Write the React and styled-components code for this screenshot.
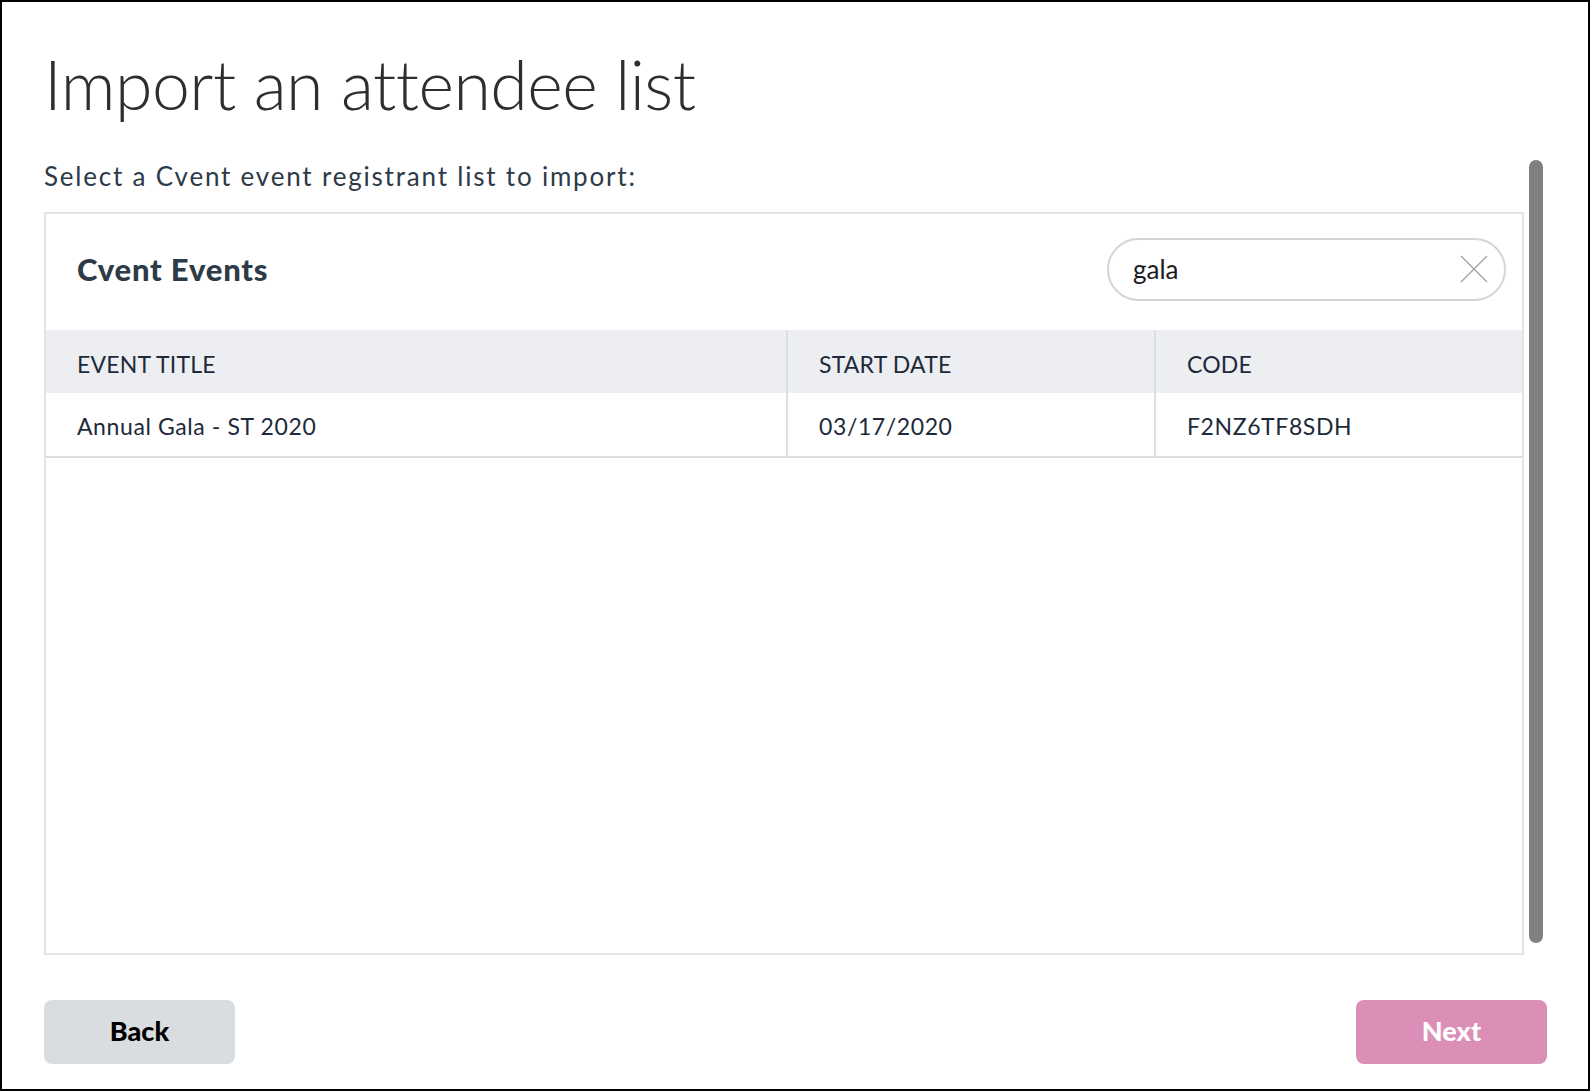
import React, { useState } from "react";
import styled, { createGlobalStyle } from "styled-components";

const GlobalStyle = createGlobalStyle`
  html, body {
    margin: 0;
    padding: 0;
    background: #fff;
  }
  * {
    box-sizing: border-box;
  }
`;

const events = [
  { id: 1, title: "Annual Gala - ST 2020", start: "03/17/2020", code: "F2NZ6TF8SDH" },
];

const columns = ["Event Title", "Start Date", "Code"];

export default function App() {
  const [query, setQuery] = useState("gala");

  return (
    <Page>
      <GlobalStyle />
      <Title>Import an attendee list</Title>
      <Body>
        <Content>
          <Subtitle>Select a Cvent event registrant list to import:</Subtitle>
          <Card>
            <CardHeader>
              <CardTitle>Cvent Events</CardTitle>
              <SearchBox>
                <SearchInput value={query} onChange={(e) => setQuery(e.target.value)} />
                <ClearButton onClick={() => setQuery("")} aria-label="Clear search">
                  <svg width="28" height="28" viewBox="0 0 28 28">
                    <path d="M1 1 L27 27 M27 1 L1 27" stroke="#9a9ea3" strokeWidth="1.2" fill="none" />
                  </svg>
                </ClearButton>
              </SearchBox>
            </CardHeader>
            <Row $head>
              {columns.map((c) => (
                <Cell key={c} $head>
                  {c}
                </Cell>
              ))}
            </Row>
            {events.map((ev) => (
              <Row key={ev.id}>
                <Cell>{ev.title}</Cell>
                <Cell>{ev.start}</Cell>
                <Cell>{ev.code}</Cell>
              </Row>
            ))}
          </Card>
        </Content>
        <ScrollTrack>
          <ScrollThumb />
        </ScrollTrack>
      </Body>
      <Footer>
        <Button>Back</Button>
        <Button $primary>Next</Button>
      </Footer>
    </Page>
  );
}

const Page = styled.div`
  height: 1091px;
  width: 1590px;
  border: 2px solid #000;
  padding: 48px 41px 0 42px;
  display: flex;
  flex-direction: column;
  font-family: Lato, "Liberation Sans", sans-serif;
`;

const Title = styled.h1`
  margin: 0;
  font-size: 68px;
  line-height: 68px;
  font-weight: 300;
  letter-spacing: -0.5px;
  color: #2e2e30;
`;

const Body = styled.div`
  display: flex;
  margin-top: 42px;
`;

const Content = styled.div`
  flex: 1;
  display: flex;
  flex-direction: column;
`;

const Subtitle = styled.p`
  margin: 1px 0 0;
  font-size: 26px;
  line-height: 31px;
  letter-spacing: 1.8px;
  color: #2d3a47;
`;

const Card = styled.div`
  margin-top: 20px;
  height: 743px;
  border: 2px solid #e2e4e6;
  display: flex;
  flex-direction: column;
`;

const CardHeader = styled.div`
  height: 116px;
  display: flex;
  align-items: center;
  justify-content: space-between;
  padding: 0 16px 6px 31px;
`;

const CardTitle = styled.h2`
  margin: 0;
  font-size: 31px;
  font-weight: 900;
  letter-spacing: 0.8px;
  color: #2d3a47;
`;

const SearchBox = styled.div`
  width: 399px;
  height: 63px;
  border: 2px solid #d3d6d9;
  border-radius: 32px;
  display: flex;
  align-items: center;
  padding: 0 16px 0 24px;
`;

const SearchInput = styled.input`
  flex: 1;
  border: none;
  outline: none;
  background: transparent;
  font-family: Lato, "Liberation Sans", sans-serif;
  font-size: 26px;
  color: #1c1c1c;
  padding: 0;
`;

const ClearButton = styled.button`
  border: none;
  background: none;
  padding: 0;
  display: flex;
  cursor: pointer;
`;

const Row = styled.div`
  display: grid;
  grid-template-columns: 740px 1fr 1fr;
  height: ${({ $head }) => ($head ? "63px" : "65px")};
  background: ${({ $head }) => ($head ? "#edeef2" : "#fff")};
  border-bottom: ${({ $head }) => ($head ? "none" : "2px solid #dcdfe2")};
`;

const Cell = styled.div`
  display: flex;
  align-items: center;
  padding: ${({ $head }) => ($head ? "4px 0 0 31px" : "3px 0 0 31px")};
  font-size: 23px;
  letter-spacing: ${({ $head }) => ($head ? "0.2px" : "0.6px")};
  text-transform: ${({ $head }) => ($head ? "uppercase" : "none")};
  color: #1d2a3a;

  & + & {
    border-left: 2px solid #dcdfe2;
  }
`;

const ScrollTrack = styled.div`
  width: 14px;
  margin: 0 4px 0 5px;
  display: flex;
`;

const ScrollThumb = styled.div`
  width: 14px;
  height: 783px;
  border-radius: 7px;
  background: #808080;
`;

const Footer = styled.div`
  display: flex;
  justify-content: space-between;
  margin-top: 45px;
`;

const Button = styled.button`
  width: 191px;
  height: 64px;
  border: none;
  border-radius: 8px;
  padding: 0 0 4px;
  font-family: Lato, "Liberation Sans", sans-serif;
  font-size: 27px;
  font-weight: 900;
  cursor: pointer;
  background: ${({ $primary }) => ($primary ? "#db8fb7" : "#dadde0")};
  color: ${({ $primary }) => ($primary ? "#fff" : "#000")};
`;
